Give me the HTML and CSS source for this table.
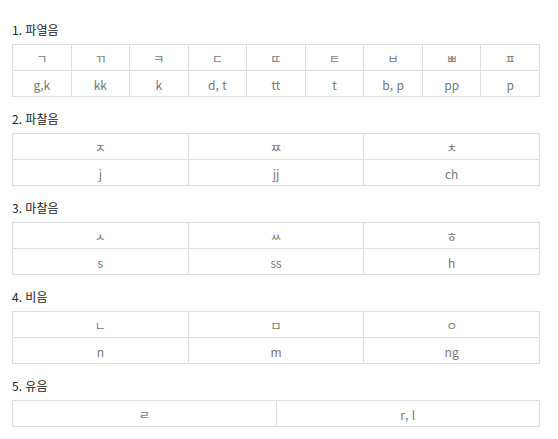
FILE: index.html
```html
<!DOCTYPE html>
<html lang="ko">
<head>
<meta charset="utf-8">
<link rel="stylesheet" href="styles.css">
</head>
<body>
<section class="group">
  <h2 class="title">1. 파열음</h2>
  <div class="grid cols-9">
    <div class="cell">ㄱ</div><div class="cell">ㄲ</div><div class="cell">ㅋ</div><div class="cell">ㄷ</div><div class="cell">ㄸ</div><div class="cell">ㅌ</div><div class="cell">ㅂ</div><div class="cell">ㅃ</div><div class="cell">ㅍ</div>
    <div class="cell">g,k</div><div class="cell">kk</div><div class="cell">k</div><div class="cell">d, t</div><div class="cell">tt</div><div class="cell">t</div><div class="cell">b, p</div><div class="cell">pp</div><div class="cell">p</div>
  </div>
</section>
<section class="group">
  <h2 class="title">2. 파찰음</h2>
  <div class="grid cols-3">
    <div class="cell">ㅈ</div><div class="cell">ㅉ</div><div class="cell">ㅊ</div>
    <div class="cell">j</div><div class="cell">jj</div><div class="cell">ch</div>
  </div>
</section>
<section class="group">
  <h2 class="title">3. 마찰음</h2>
  <div class="grid cols-3">
    <div class="cell">ㅅ</div><div class="cell">ㅆ</div><div class="cell">ㅎ</div>
    <div class="cell">s</div><div class="cell">ss</div><div class="cell">h</div>
  </div>
</section>
<section class="group">
  <h2 class="title">4. 비음</h2>
  <div class="grid cols-3">
    <div class="cell">ㄴ</div><div class="cell">ㅁ</div><div class="cell">ㅇ</div>
    <div class="cell">n</div><div class="cell">m</div><div class="cell">ng</div>
  </div>
</section>
<section class="group">
  <h2 class="title">5. 유음</h2>
  <div class="grid cols-2">
    <div class="cell">ㄹ</div><div class="cell">r, l</div>
  </div>
</section>
</body>
</html>
```
FILE: styles.css
```css
html, body {
  margin: 0;
  padding: 0;
  background: #fff;
}
body {
  padding: 8px 18px 0 12px;
  font-family: "Noto Sans CJK KR", "Noto Sans", sans-serif;
  font-size: 12px;
}
.group {
  margin-top: 14px;
}
.title {
  margin: 0 0 6px 0;
  font-size: 12px;
  font-weight: normal;
  line-height: 16px;
  color: #222;
}
.grid {
  display: grid;
  width: 528px;
  box-sizing: border-box;
  padding: 1px;
  gap: 1px;
  background: #dcdcdc;
}
.cols-9 { grid-template-columns: repeat(9, 1fr); }
.cols-3 { grid-template-columns: repeat(3, 1fr); }
.cols-2 { grid-template-columns: repeat(2, 1fr); }
.cell {
  background: #fff;
  height: 25px;
  line-height: 27px;
  text-align: center;
  color: #777;
  font-size: 12px;
}
```
